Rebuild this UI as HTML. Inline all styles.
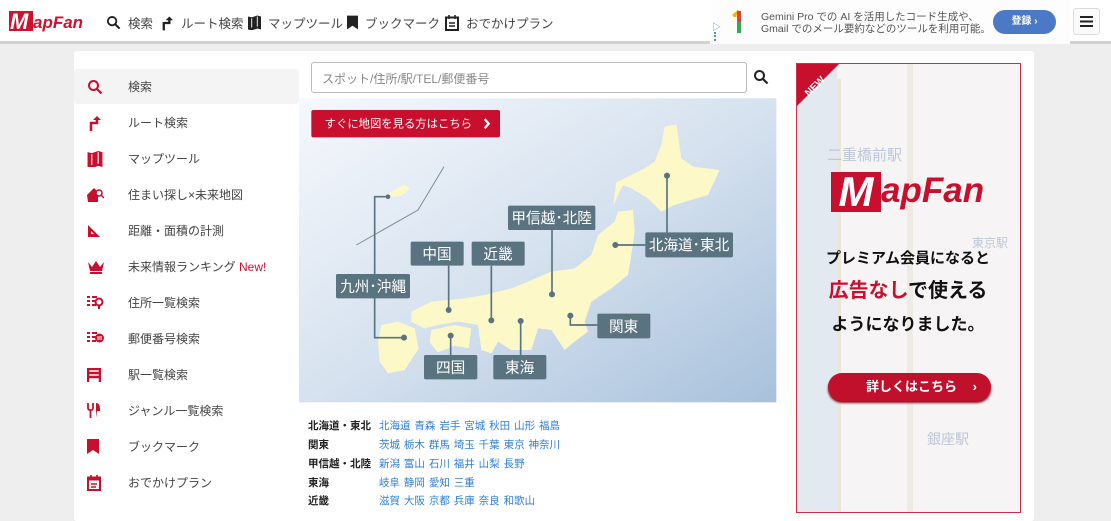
<!DOCTYPE html>
<html><head><meta charset="utf-8"><style>
*{box-sizing:border-box;margin:0;padding:0}
body{width:1111px;height:509px;overflow:hidden;background:#eeeeee;font-family:"Liberation Sans","Noto Sans CJK JP",sans-serif;position:relative;color:#333}
.hdr{position:absolute;left:0;top:0;width:1111px;height:44px;background:#fff;border-bottom:3px solid #d2d2d2}
.nav{position:absolute;top:13px;font-size:12.5px;color:#444;display:flex;align-items:center;gap:7px}
.abs{position:absolute}
.main{position:absolute;left:74px;top:51px;width:960px;height:470px;background:#fff;border-radius:3px}
.si{position:absolute;left:74px;width:225px;height:35px;font-size:12px;color:#444;display:flex;align-items:center}
.si svg{position:absolute;left:13px}
.si span{position:absolute;left:54px}
.rg{position:absolute;left:308px;font-size:10.5px;display:flex}
.rg b{width:71px;color:#222}
.rg span{color:#2f7fd6;word-spacing:1px}
</style></head><body>
<div class="hdr">
 <div class="abs" style="left:8px;top:10px;width:80px;height:22px">
  <svg width="80" height="22" viewBox="0 0 80 22"><rect x="1" y="1" width="24" height="20" fill="#d0102c"/><text x="2" y="19" font-family="Liberation Sans" font-weight="bold" font-style="italic" font-size="22" fill="#fff">M</text><text x="25" y="18" font-family="Liberation Sans" font-weight="bold" font-style="italic" font-size="17" fill="#d0102c">apFan</text></svg>
 </div>
 <div class="nav" style="left:106px"><svg width="15" height="15" viewBox="0 0 16 16"><circle cx="6.5" cy="6.5" r="4.5" fill="none" stroke="#222" stroke-width="2"/><path d="M10 10l4.5 4.5" stroke="#222" stroke-width="2.2"/></svg>検索</div>
 <div class="nav" style="left:161px"><svg width="13" height="16" viewBox="0 0 14 16"><path d="M3 16V8h6V4" fill="none" stroke="#222" stroke-width="2.5"/><path d="M5 5l4-4 4 4z" fill="#222"/></svg>ルート検索</div>
 <div class="nav" style="left:248px"><svg width="13" height="15" viewBox="0 0 14 15"><path d="M0 1l4 1 6-2 4 1v14l-4-1-6 2-4-1z" fill="#222"/><path d="M4 3v10M10 1v11" stroke="#fff" stroke-width="1"/></svg>マップツール</div>
 <div class="nav" style="left:347px"><svg width="11" height="15" viewBox="0 0 12 15"><path d="M0 0h12v15l-6-4-6 4z" fill="#222"/></svg>ブックマーク</div>
 <div class="nav" style="left:445px"><svg width="14" height="16" viewBox="0 0 14 16"><rect x="1" y="2.5" width="12" height="12.5" fill="none" stroke="#222" stroke-width="2"/><path d="M4 0v4M10 0v4M4 8h6M4 11h6" stroke="#222" stroke-width="1.6"/></svg>おでかけプラン</div>
 <div class="abs" style="left:710px;top:0;width:360px;height:44px;background:#fdfdfd"></div>
 <div class="abs" style="left:712px;top:20px;color:#4a90e2;font-size:9px">▷</div>
 <div class="abs" style="left:714px;top:32px;width:3px;height:9px;border-left:2px dotted #4a90e2"></div>
 <svg class="abs" style="left:731px;top:10px" width="14" height="24" viewBox="0 0 14 24"><path d="M2 6l6-5" stroke="#f4b400" stroke-width="3"/><path d="M8 1v11" stroke="#db4437" stroke-width="4"/><path d="M8 12v11" stroke="#34a853" stroke-width="4"/><path d="M4 4v3" stroke="#f4b400" stroke-width="3"/></svg>
 <div class="abs" style="left:761px;top:11px;font-size:10.5px;line-height:12px;color:#555">Gemini Pro での AI を活用したコード生成や、<br>Gmail でのメール要約などのツールを利用可能。</div>
 <div class="abs" style="left:993px;top:10px;width:63px;height:24px;border-radius:12px;background:#4b79c5;color:#fff;font-size:10px;font-weight:bold;text-align:center;line-height:24px">登録 ›</div>
 <div class="abs" style="left:1073px;top:8px;width:27px;height:27px;border:1px solid #ddd;border-radius:3px;background:#fafafa"><svg width="25" height="25" viewBox="0 0 25 25"><path d="M6 8h13M6 12.5h13M6 17h13" stroke="#222" stroke-width="2"/></svg></div>
</div>

<div class="main"></div>
<div class="abs" style="left:74px;top:69px;width:225px;height:35px;background:#f4f4f4;border-radius:3px"></div>
<div class="si" style="top:69px"><svg width="16" height="16" viewBox="0 0 16 16"><circle cx="6.5" cy="6.5" r="4.5" fill="none" stroke="#c8102e" stroke-width="2"/><path d="M10 10l4.5 4.5" stroke="#c8102e" stroke-width="2.2"/></svg><span>検索</span></div>
<div class="si" style="top:105px"><svg width="16" height="16" viewBox="0 0 14 16"><path d="M3 16V8h6V4" fill="none" stroke="#c8102e" stroke-width="2.5"/><path d="M5 5l4-4 4 4z" fill="#c8102e"/></svg><span>ルート検索</span></div>
<div class="si" style="top:141px"><svg width="16" height="16" viewBox="0 0 14 15"><path d="M0 1l4 1 6-2 4 1v14l-4-1-6 2-4-1z" fill="#c8102e"/><path d="M4 3v10M10 1v11" stroke="#fff"/></svg><span>マップツール</span></div>
<div class="si" style="top:177px"><svg width="17" height="15" viewBox="0 0 17 15"><path d="M0 8L7 1l4 4v10H1z" fill="#c8102e"/><circle cx="12" cy="6" r="3" fill="#fff" stroke="#c8102e" stroke-width="1.5"/><path d="M14 8l3 3" stroke="#c8102e" stroke-width="1.5"/></svg><span>住まい探し×未来地図</span></div>
<div class="si" style="top:213px"><svg width="14" height="14" viewBox="0 0 14 14"><path d="M1 1v12h12z" fill="#c8102e"/><path d="M4 7v3h3z" fill="#fff"/></svg><span>距離・面積の計測</span></div>
<div class="si" style="top:249px"><svg width="18" height="14" viewBox="0 0 18 14"><path d="M1 2l4 5 4-6 4 6 4-5-2 9H3z" fill="#c8102e"/><rect x="3" y="12" width="12" height="2" fill="#c8102e"/></svg><span>未来情報ランキング <b style="color:#c8102e;font-weight:normal">New!</b></span></div>
<div class="si" style="top:285px"><svg width="17" height="13" viewBox="0 0 17 13"><path d="M0 1h3M5 1h5M0 5h3M5 5h4M0 9h3M5 9h4" stroke="#c8102e" stroke-width="2"/><circle cx="12" cy="6" r="3.5" fill="none" stroke="#c8102e" stroke-width="2"/><path d="M12 10v3" stroke="#c8102e" stroke-width="2"/></svg><span>住所一覧検索</span></div>
<div class="si" style="top:321px"><svg width="17" height="13" viewBox="0 0 17 13"><path d="M0 1h3M5 1h5M0 5h3M5 5h4M0 9h3M5 9h4" stroke="#c8102e" stroke-width="2"/><circle cx="12.5" cy="6" r="4.5" fill="#c8102e"/><path d="M10 5h5M10 7h5" stroke="#fff"/></svg><span>郵便番号検索</span></div>
<div class="si" style="top:357px"><svg width="14" height="14" viewBox="0 0 14 14"><path d="M1 14V1h12v13M1 5h12M1 9h12" fill="none" stroke="#c8102e" stroke-width="2.5"/></svg><span>駅一覧検索</span></div>
<div class="si" style="top:393px"><svg width="14" height="15" viewBox="0 0 14 15"><path d="M1 0v5q0 2 2 2h1q2 0 2-2V0M3.5 7v8" fill="none" stroke="#c8102e" stroke-width="1.8"/><path d="M9 15V0q4 0 4 6v2H10" fill="#c8102e"/></svg><span>ジャンル一覧検索</span></div>
<div class="si" style="top:429px"><svg width="12" height="15" viewBox="0 0 12 15"><path d="M0 0h12v15l-6-4-6 4z" fill="#c8102e"/></svg><span>ブックマーク</span></div>
<div class="si" style="top:465px"><svg width="14" height="16" viewBox="0 0 14 16"><rect x="1" y="2.5" width="12" height="12.5" fill="none" stroke="#c8102e" stroke-width="2"/><rect x="1" y="2.5" width="12" height="3" fill="#c8102e"/><path d="M4 0v4M10 0v4M4 9h6M4 12h5" stroke="#c8102e" stroke-width="1.6"/></svg><span>おでかけプラン</span></div>

<div class="abs" style="left:311px;top:62px;width:436px;height:31px;border:1px solid #bbb;border-radius:3px;font-size:12px;color:#888;padding:7px 10px">スポット/住所/駅/TEL/郵便番号</div>
<svg class="abs" style="left:753px;top:69px" width="16" height="16" viewBox="0 0 16 16"><circle cx="6.5" cy="6.5" r="4.5" fill="none" stroke="#222" stroke-width="2"/><path d="M10 10l4.5 4.5" stroke="#222" stroke-width="2.2"/></svg>

<svg class="abs" style="left:298px;top:95px" width="480" height="310" viewBox="0 0 1440 930">
<defs><linearGradient id="g" x1="0" y1="0" x2="1" y2="1"><stop offset="0" stop-color="#f6f8fc"/><stop offset="0.5" stop-color="#d6e2ef"/><stop offset="1" stop-color="#a8c1dc"/></linearGradient></defs>
<rect x="3" y="10" width="1432" height="912" fill="url(#g)"/>
<path d="M175 450L360 345L438 215" fill="none" stroke="#7b8fa0" stroke-width="3"/>
<g fill="#fdf8c8">
<path d="M1100 95L1135 88L1150 190L1185 215L1265 225L1230 300L1130 330L1090 350L1050 310L1000 280L975 270L960 300L945 335L955 262L1000 240L1040 220L1070 200L1090 150Z"/>
<path d="M960 350L1005 345L1010 410L1000 480L990 540L940 580L880 620L860 680L870 710L830 740L800 765L760 705L720 700L700 765L640 765L600 740L580 775L550 765L540 690L480 680L420 690L380 700L340 680L340 650L400 620L500 610L560 600L640 580L690 560L760 530L830 520L880 480L900 420L950 380Z"/>
<path d="M250 690L300 680L350 700L362 760L320 825L270 835L245 800L240 740Z"/>
<path d="M400 705L470 690L520 700L512 760L470 752L420 772L395 742Z"/>
<path d="M262 300L320 268L336 280L312 302L270 308Z"/>
</g>
<g stroke="#5a7380" stroke-width="5" fill="none">
<path d="M270 305H230V728H318"/><path d="M452 512V645"/><path d="M580 512V676"/><path d="M762 405V598"/><path d="M1107 242V412"/><path d="M952 450H1042"/><path d="M817 662V690H898"/><path d="M458 722V780"/><path d="M668 678V780"/>
</g>
<g fill="#5a7380"><circle cx="270" cy="305" r="7"/><circle cx="318" cy="728" r="9"/><circle cx="452" cy="645" r="9"/><circle cx="580" cy="676" r="9"/><circle cx="762" cy="598" r="9"/><circle cx="1107" cy="242" r="9"/><circle cx="952" cy="450" r="9"/><circle cx="817" cy="662" r="9"/><circle cx="458" cy="722" r="9"/><circle cx="668" cy="678" r="9"/>
<rect x="630" y="332" width="262" height="73" rx="5"/><rect x="1042" y="412" width="263" height="75" rx="5"/><rect x="338" y="440" width="159" height="72" rx="5"/><rect x="521" y="440" width="159" height="72" rx="5"/><rect x="114" y="537" width="222" height="73" rx="5"/><rect x="898" y="656" width="159" height="74" rx="5"/><rect x="378" y="780" width="160" height="73" rx="5"/><rect x="586" y="780" width="159" height="73" rx="5"/></g>
<g fill="#fff" font-size="44" text-anchor="middle" font-family="Liberation Sans,Noto Sans CJK JP,sans-serif">
<text x="761" y="384">甲信越･北陸</text><text x="1173" y="465">北海道･東北</text><text x="417" y="492">中国</text><text x="600" y="492">近畿</text><text x="225" y="589">九州･沖縄</text><text x="977" y="709">関東</text><text x="458" y="832">四国</text><text x="665" y="832">東海</text></g>
<rect x="40" y="45" width="566" height="82" rx="6" fill="#c8102e"/>
<text x="80" y="97" fill="#fff" font-size="34" font-family="Liberation Sans,Noto Sans CJK JP,sans-serif">すぐに地図を見る方はこちら</text>
<path d="M560 72l12 14-12 14" fill="none" stroke="#fff" stroke-width="7"/>
</svg>

<div class="rg" style="top:418px"><b>北海道・東北</b><span>北海道 青森 岩手 宮城 秋田 山形 福島</span></div>
<div class="rg" style="top:437px"><b>関東</b><span>茨城 栃木 群馬 埼玉 千葉 東京 神奈川</span></div>
<div class="rg" style="top:456px"><b>甲信越・北陸</b><span>新潟 富山 石川 福井 山梨 長野</span></div>
<div class="rg" style="top:475px"><b>東海</b><span>岐阜 静岡 愛知 三重</span></div>
<div class="rg" style="top:493px"><b>近畿</b><span>滋賀 大阪 京都 兵庫 奈良 和歌山</span></div>

<div class="abs" style="left:796px;top:63px;width:225px;height:450px;border:1.5px solid #d2304a;background:#f6f4f4;overflow:hidden">
 <div class="abs" style="left:0;top:0;width:40px;height:450px;background:#e3e9f0"></div>
 <div class="abs" style="left:40px;top:15px;width:4px;height:450px;background:#ece6d8"></div>
 <div class="abs" style="left:110px;top:0;width:6px;height:450px;background:#eeebe4"></div>
 <div class="abs" style="left:30px;top:80px;font-size:15px;color:#bcc7d8">二重橋前駅</div>
 <div class="abs" style="left:80px;top:310px;font-size:16px;color:#bcc7d8">有楽町駅</div>
 <div class="abs" style="left:130px;top:365px;font-size:14px;color:#bcc7d8">銀座駅</div>
 <div class="abs" style="left:175px;top:170px;font-size:12px;color:#bcc7d8">東京駅</div>
 <svg class="abs" style="left:0;top:0" width="42" height="42"><path d="M0 0H42L0 42z" fill="#c8102e"/><text x="4" y="26" fill="#fff" font-size="10" font-weight="bold" transform="rotate(-45 16 20)" font-family="Liberation Sans">NEW</text></svg>
 <div class="abs" style="left:34px;top:108px;width:50px;height:40px;background:#c8102e;color:#fff;font:italic bold 42px/40px 'Liberation Sans';text-align:center">M</div>
 <div class="abs" style="left:84px;top:106px;color:#c8102e;font:italic bold 35px/42px 'Liberation Sans'">apFan</div>
 <div class="abs" style="left:0;width:222px;top:183px;text-align:center;font-size:15px;font-weight:bold;color:#111">プレミアム会員になると</div>
 <div class="abs" style="left:0;width:222px;top:210px;text-align:center;font-size:20px;font-weight:bold;color:#111"><span style="color:#c8102e">広告なし</span>で使える</div>
 <div class="abs" style="left:0;width:222px;top:246px;text-align:center;font-size:17px;font-weight:bold;color:#111">ようになりました。</div>
 <div class="abs" style="left:31px;top:309px;width:163px;height:28px;border-radius:14px;background:#c0102c;box-shadow:0 2px 2px #8a0a1e;color:#fff;font-size:13px;font-weight:bold;line-height:28px;padding-left:38px">詳しくはこちら<span style="position:absolute;right:14px">›</span></div>
</div>
</body></html>
